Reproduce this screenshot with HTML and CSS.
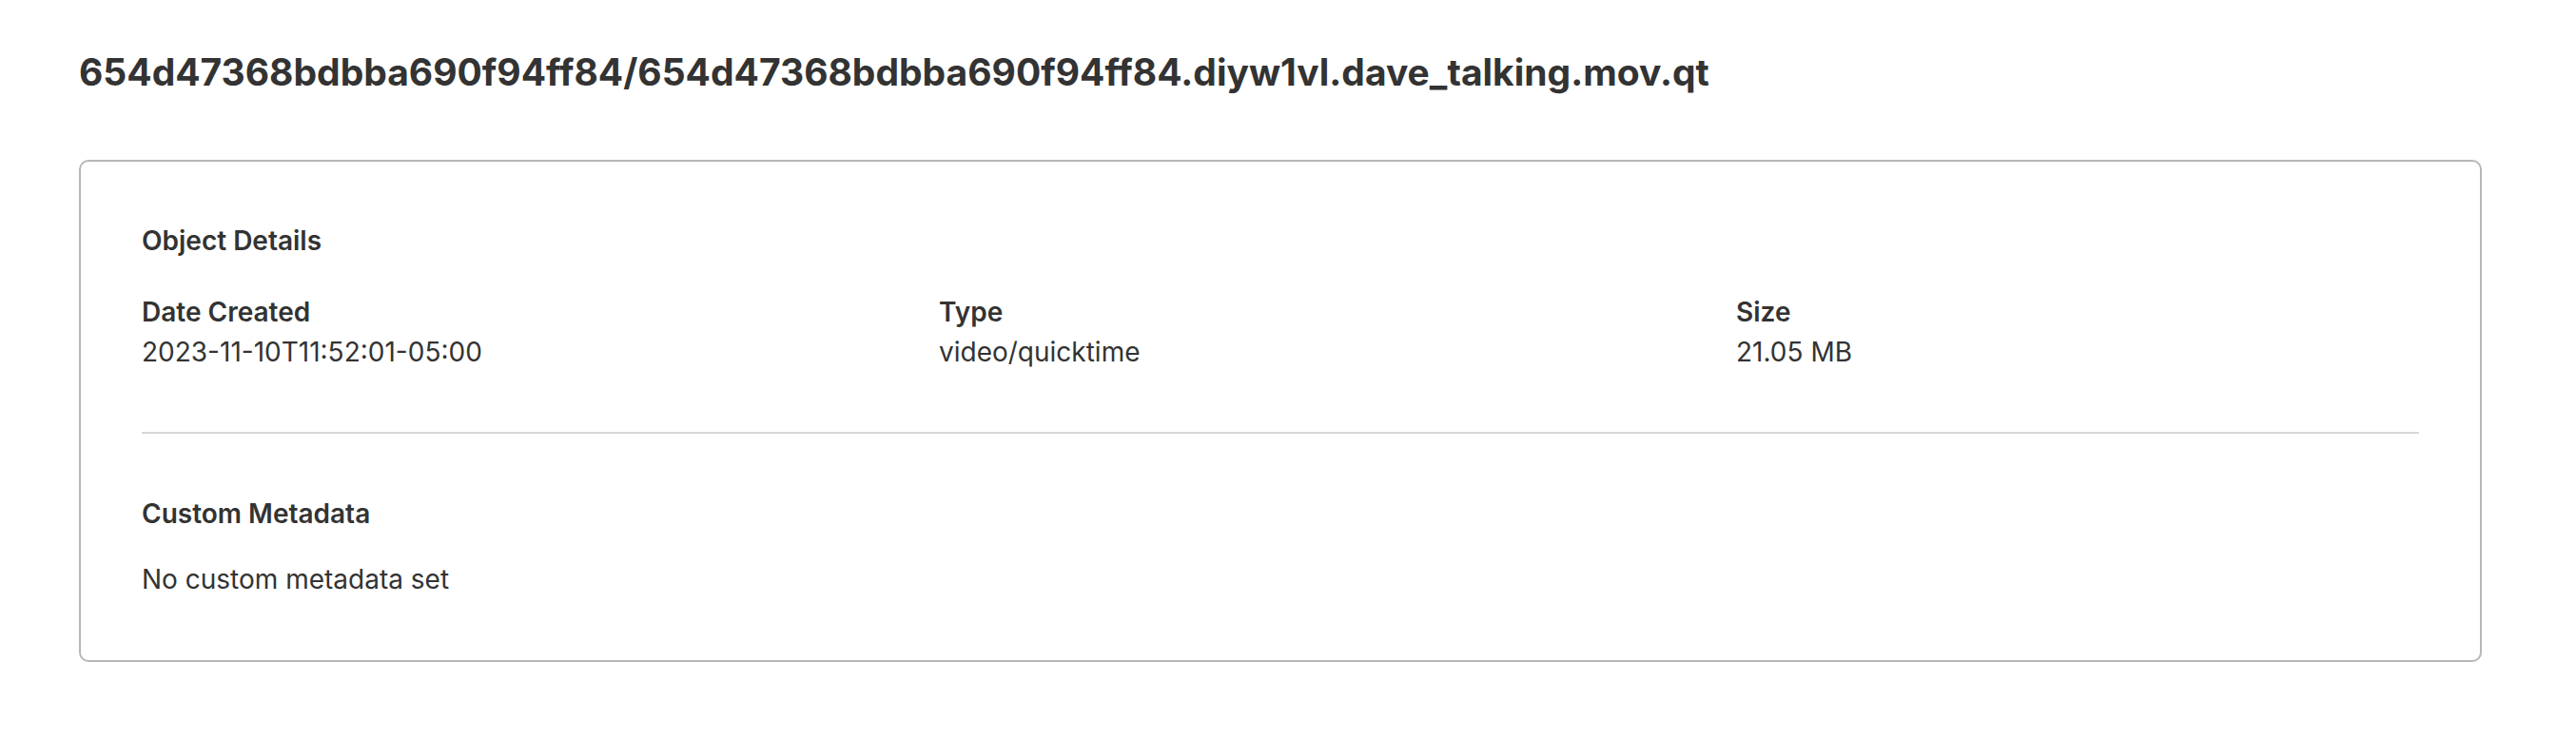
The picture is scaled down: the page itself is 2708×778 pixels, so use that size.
FILE: index.html
```html
<!DOCTYPE html>
<html>
<head>
    <link rel="stylesheet" href="styles.css">
</head>
<body>
    <div class="object-page">
        <h1 class="object-key">654d47368bdbba690f94ff84/654d47368bdbba690f94ff84.diyw1vl.dave_talking.mov.qt</h1>

        <div class="object-card">
            <div class="section-title">Object Details</div>
            <div class="details-grid">
                <div class="detail-item">
                    <div class="detail-label">Date Created</div>
                    <div class="detail-value">2023-11-10T11:52:01-05:00</div>
                </div>
                <div class="detail-item">
                    <div class="detail-label">Type</div>
                    <div class="detail-value">video/quicktime</div>
                </div>
                <div class="detail-item">
                    <div class="detail-label">Size</div>
                    <div class="detail-value">21.05 MB</div>
                </div>
            </div>

            <hr class="card-divider">

            <div class="section-title metadata-title">Custom Metadata</div>
            <div class="metadata-empty">No custom metadata set</div>
        </div>
    </div>
</body>
</html>
```

FILE: styles.css
```css
body {
    margin: 0;
    background: #ffffff;
    color: #333333;
    font-family: Inter, "Noto Sans", sans-serif;
}
.object-page {
    padding: 52px 99px 0 83px;
}
.object-key {
    margin: 0;
    font-size: 39px;
    line-height: 48px;
    font-weight: 700;
    color: #333333;
}
.object-card {
    margin-top: 68px;
    padding: 62px 64px 64px;
    border: 2px solid #b7b7b7;
    border-radius: 10px;
}
.section-title {
    font-size: 28px;
    line-height: 42px;
    font-weight: 600;
}
.details-grid {
    display: grid;
    grid-template-columns: repeat(3, 1fr);
    column-gap: 120px;
    margin-top: 33px;
}
.detail-label {
    font-size: 28px;
    line-height: 42px;
    font-weight: 600;
}
.detail-value {
    font-size: 28px;
    line-height: 42px;
}
.card-divider {
    margin: 63px 0 0;
    border: none;
    border-top: 2px solid #d7d7d7;
}
.metadata-title {
    margin-top: 63px;
}
.metadata-empty {
    margin-top: 27px;
    font-size: 28px;
    line-height: 42px;
}
```
